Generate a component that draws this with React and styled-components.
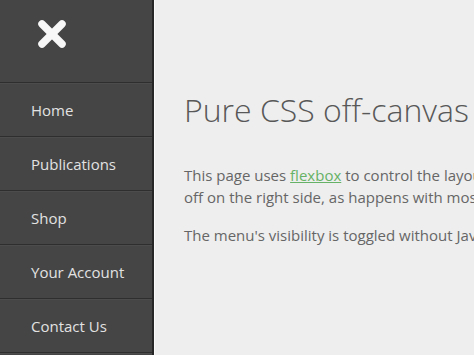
import React from "react";
import styled, { createGlobalStyle } from "styled-components";

const Global = createGlobalStyle`
  html, body { margin: 0; padding: 0; height: 100%; overflow: hidden; }
  body { background: #eeeeee; font-family: "Open Sans", "Liberation Sans", sans-serif; }
`;

const Page = styled.div`
  display: flex;
  width: 474px;
  height: 355px;
  overflow: hidden;
`;

const Sidebar = styled.nav`
  flex: 0 0 152px;
  background: #454545;
  border-right: 2px solid #262626;
  box-shadow: 1px 0 0 #fafafa;
  display: flex;
  flex-direction: column;
  overflow: hidden;
`;

const Header = styled.div`
  flex: 0 0 82px;
  display: flex;
  align-items: flex-start;
  padding: 19px 0 0 37px;
  box-sizing: border-box;
`;

const MenuList = styled.ul`
  list-style: none;
  margin: 0;
  padding: 0;
  flex: 0 0 auto;
`;

const MenuItem = styled.li`
  height: 54px;
  box-sizing: border-box;
  border-top: 1px solid #2e2e2e;
  box-shadow: inset 0 1px 0 rgba(255, 255, 255, 0.04);
  display: flex;
  align-items: center;
  padding-left: 31px;
  color: #e2e2e2;
  font-size: 15px;
`;

const Main = styled.main`
  flex: 0 0 auto;
  width: 700px;
  padding: 0 0 0 30px;
`;

const Title = styled.h1`
  margin: 90px 0 34px;
  font-weight: 300;
  font-size: 32px;
  line-height: 40px;
  color: #585858;
`;

const Para = styled.p`
  margin: 0 0 16px;
  font-size: 15px;
  line-height: 22px;
  color: #666;
  white-space: nowrap;
`;

const Link = styled.a`
  color: #66b266;
  text-decoration: underline;
`;

const CloseIcon = () => (
  <svg width="30" height="30" viewBox="0 0 30 30">
    <g stroke="#f7f7f7" strokeWidth="7.5" strokeLinecap="round">
      <line x1="5" y1="5" x2="25" y2="25" />
      <line x1="25" y1="5" x2="5" y2="25" />
    </g>
  </svg>
);

const items = ["Home", "Publications", "Shop", "Your Account", "Contact Us"];

export default function App() {
  return (
    <>
      <Global />
      <Page>
        <Sidebar>
          <Header>
            <CloseIcon />
          </Header>
          <MenuList>
            {items.map((t) => (
              <MenuItem key={t}>{t}</MenuItem>
            ))}
            <MenuItem />
          </MenuList>
        </Sidebar>
        <Main>
          <Title>Pure CSS off-canvas</Title>
          <Para>
            This page uses <Link href="#">flexbox</Link> to control the layout. When the menu is open, the content is pushed
            <br />
            off on the right side, as happens with most off-canvas menus.
          </Para>
          <Para>The menu's visibility is toggled without JavaScript.</Para>
        </Main>
      </Page>
    </>
  );
}
